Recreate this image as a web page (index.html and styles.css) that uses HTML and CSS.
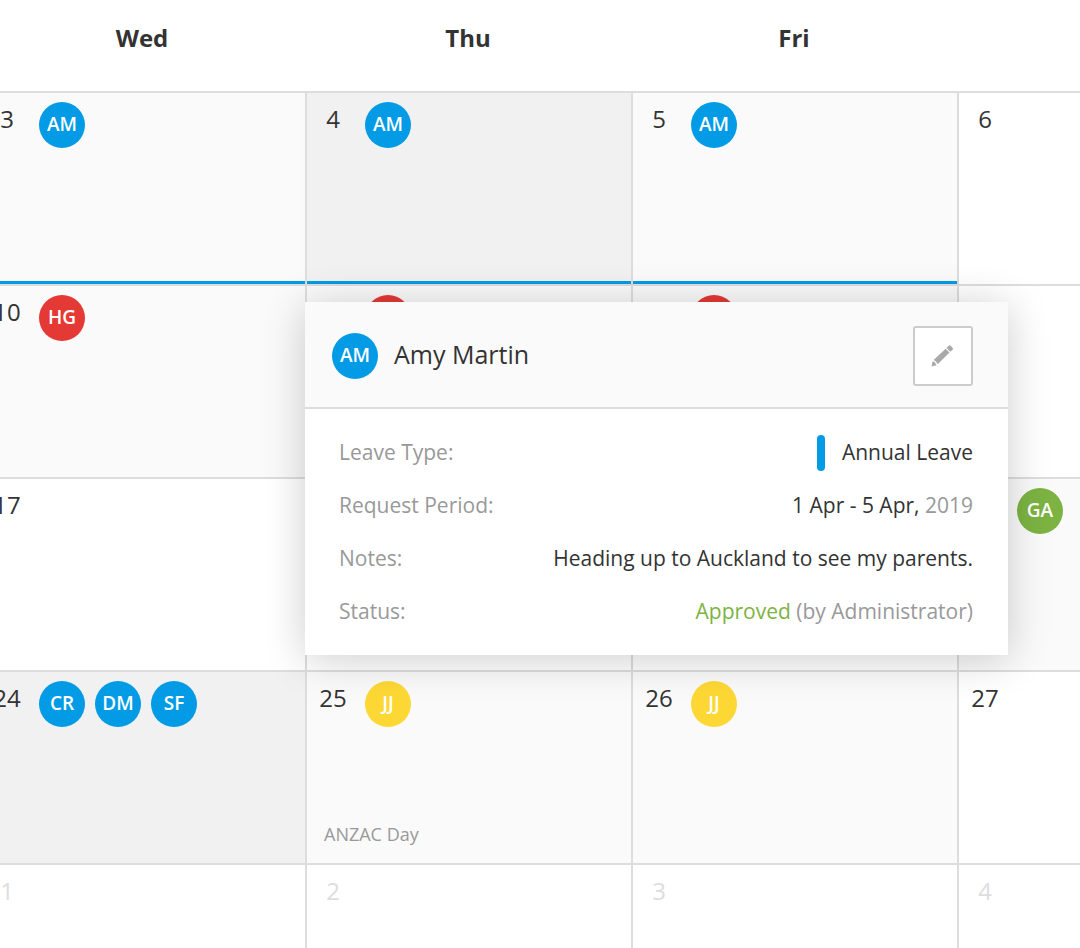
FILE: index.html
```html
<!DOCTYPE html>
<html lang="en">
<head>
<meta charset="utf-8">
<title>Leave calendar</title>
<link rel="stylesheet" href="styles.css">
</head>
<body>
<main class="calendar">
  <table class="month">
    <thead>
      <tr><th scope="col">Wed</th><th scope="col">Thu</th><th scope="col">Fri</th><th scope="col"></th></tr>
    </thead>
    <tbody>
      <tr>
        <td class="tint"><div class="day has-leave"><span class="date">3</span><span class="avatar blue">AM</span></div></td>
        <td class="shade"><div class="day has-leave"><span class="date">4</span><span class="avatar blue">AM</span></div></td>
        <td class="tint"><div class="day has-leave"><span class="date">5</span><span class="avatar blue">AM</span></div></td>
        <td><div class="day"><span class="date">6</span></div></td>
      </tr>
      <tr>
        <td class="tint"><div class="day"><span class="date">10</span><span class="avatar red">HG</span></div></td>
        <td class="tint"><div class="day"><span class="date"></span><span class="avatar red"></span></div></td>
        <td class="tint"><div class="day"><span class="date"></span><span class="avatar red"></span></div></td>
        <td><div class="day"></div></td>
      </tr>
      <tr>
        <td><div class="day"><span class="date">17</span></div></td>
        <td><div class="day"></div></td>
        <td><div class="day"></div></td>
        <td class="tint"><div class="day"><span class="date"></span><span class="avatar green">GA</span></div></td>
      </tr>
      <tr>
        <td class="shade"><div class="day"><span class="date">24</span><span class="avatar blue">CR</span><span class="avatar blue">DM</span><span class="avatar blue">SF</span></div></td>
        <td class="tint"><div class="day"><span class="date">25</span><span class="avatar yellow">JJ</span><span class="holiday">ANZAC Day</span></div></td>
        <td class="tint"><div class="day"><span class="date">26</span><span class="avatar yellow">JJ</span></div></td>
        <td><div class="day"><span class="date">27</span></div></td>
      </tr>
      <tr class="next-month">
        <td><div class="day"><span class="date">1</span></div></td>
        <td><div class="day"><span class="date">2</span></div></td>
        <td><div class="day"><span class="date">3</span></div></td>
        <td><div class="day"><span class="date">4</span></div></td>
      </tr>
    </tbody>
  </table>

  <section class="popover" aria-label="Leave request">
    <header class="popover-head">
      <span class="avatar blue">AM</span>
      <h2 class="name">Amy Martin</h2>
      <button class="edit" type="button" aria-label="Edit">
        <svg width="24" height="24" viewBox="0 0 24 24" fill="#a9a9a9" aria-hidden="true">
          <path d="M.5 22.500l1.200-5.500q2.600 1 3.800 4.200z"/>
          <path d="M2.600 16L14.600 4.700l3.900 3.900L6.700 20.300Q5.300 17 2.600 16z"/>
          <path d="M15.500 3.900l2.200-2.100q1-.9 2 0l1.900 1.900q.9 1 0 2l-2.200 2.100z"/>
        </svg>
      </button>
    </header>
    <dl class="details">
      <div class="row"><dt>Leave Type:</dt><dd class="type">Annual Leave</dd></div>
      <div class="row"><dt>Request Period:</dt><dd>1 Apr - 5 Apr, <span class="muted">2019</span></dd></div>
      <div class="row"><dt>Notes:</dt><dd>Heading up to Auckland to see my parents.</dd></div>
      <div class="row"><dt>Status:</dt><dd class="muted"><span class="approved">Approved</span> (by Administrator)</dd></div>
    </dl>
  </section>
</main>
</body>
</html>
```
FILE: styles.css
```css
* {
  box-sizing: border-box;
}

body {
  margin: 0;
  background: #fff;
  color: #333;
  font-family: "Open Sans", "Noto Sans", sans-serif;
  font-size: 21px;
}

.calendar {
  position: relative;
  height: 100vh;
  overflow: hidden;
}

.month {
  width: calc(120% + 8px);
  margin-left: -21px;
  border-spacing: 0;
  table-layout: fixed;
}

.month th {
  height: 91px;
  padding: 0 0 16px;
  font-size: 24px;
  line-height: 32px;
  font-weight: 700;
}

.month td {
  padding: 0;
  border-top: 2px solid #ddd;
  border-left: 2px solid #ddd;
}

.month .tint {
  background: #fafafa;
}

.month .shade {
  background: #f1f1f1;
}

.day {
  position: relative;
  display: flex;
  align-items: flex-start;
  gap: 10px;
  height: 191px;
  padding-top: 9px;
}

.has-leave {
  border-bottom: 3px solid #039be5;
}

.date {
  width: 52px;
  margin-right: -4px;
  font-size: 24px;
  line-height: 34px;
  text-align: center;
}

.next-month .date {
  color: #ddd;
}

.holiday {
  position: absolute;
  left: 17px;
  bottom: 17px;
  color: #999;
  font-size: 18px;
  line-height: 24px;
}

.avatar {
  flex: none;
  width: 46px;
  height: 46px;
  border-radius: 50%;
  color: #fff;
  font-size: 19px;
  line-height: 45px;
  font-weight: 600;
  text-align: center;
}

.blue {
  background: #039be5;
}

.red {
  background: #e53935;
}

.green {
  background: #7cb342;
}

.yellow {
  background: #fdd835;
}

.popover {
  position: absolute;
  top: 302px;
  left: 305px;
  right: 72px;
  background: #fff;
  box-shadow: 0 4px 40px rgba(0, 10, 5, 0.2);
}

.popover-head {
  display: flex;
  align-items: center;
  gap: 16px;
  padding: 24px 35px 21px 27px;
  background: #fafafa;
  border-bottom: 2px solid #ddd;
}

.name {
  margin: 0;
  padding-bottom: 4px;
  font-size: 25px;
  line-height: 34px;
  font-weight: 400;
}

.edit {
  display: grid;
  place-items: center;
  width: 60px;
  height: 60px;
  margin-left: auto;
  padding: 0;
  background: #fff;
  border: 2px solid #ccc;
  border-radius: 3px;
}

.details {
  margin: 0;
  padding: 17px 35px 17px 34px;
}

.row {
  display: flex;
  align-items: center;
  justify-content: space-between;
  line-height: 53px;
}

.row dt,
.muted {
  color: #999;
}

.row dd {
  margin: 0;
}

.type {
  display: flex;
  align-items: center;
  gap: 17px;
}

.type::before {
  content: "";
  width: 8px;
  height: 36px;
  border-radius: 4px;
  background: #039be5;
}

.approved {
  color: #7cb342;
}
```
